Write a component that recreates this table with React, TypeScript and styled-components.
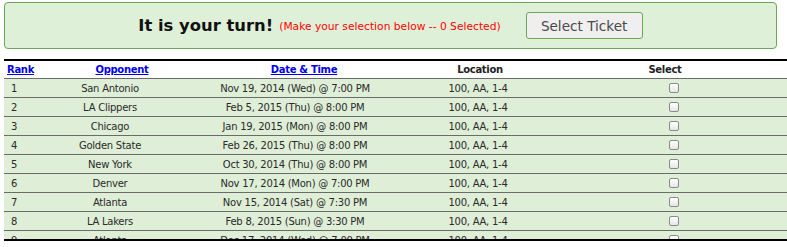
import React from "react";
import styled, { createGlobalStyle } from "styled-components";

const Global = createGlobalStyle`
  html, body { margin: 0; padding: 0; background: #fff; overflow: hidden; }
  body { font-family: "DejaVu Sans", Verdana, sans-serif; color: #2a2a2a; }
`;

const Page = styled.div`
  padding: 2px 0 0 4px;
  width: 783px;
  overflow: hidden;
`;

const Banner = styled.div`
  width: 771px;
  height: 45px;
  border: 1px solid #6aa857;
  border-radius: 4px;
  background: #dff0d8;
  display: flex;
  align-items: center;
  justify-content: center;
`;

const Title = styled.span`
  font-size: 16.4px;
  font-weight: bold;
  color: #111;
`;

const Note = styled.span`
  font-size: 10.7px;
  color: #ff0000;
  margin-left: 6px;
  position: relative;
  top: 1px;
`;

const Button = styled.button`
  margin-left: 25px;
  width: 117px;
  height: 27px;
  border: 1px solid #6aa857;
  border-radius: 3px;
  background: #efefef;
  color: #4a4a4a;
  font-family: "DejaVu Sans", Verdana, sans-serif;
  font-size: 13.6px;
  padding: 0;
`;

const Panel = styled.div`
  margin-top: 10px;
  width: 800px;
  border-top: 2px solid #000;
  border-bottom: 2px solid #000;
`;

const HeadRow = styled.div`
  display: grid;
  grid-template-columns: 46px 144px 220px 132px 238px;
  height: 17px;
  align-items: center;
  font-size: 10px;
  font-weight: bold;
  letter-spacing: -0.3px;
`;

const HeadCell = styled.div<{ $left?: boolean }>`
  text-align: ${(p) => (p.$left ? "left" : "center")};
  padding-left: ${(p) => (p.$left ? "3px" : "0")};
  color: #222;
`;

const SortLink = styled.a`
  color: #0000ee;
  text-decoration: underline;
`;

const Body = styled.div`
  height: 161px;
  overflow: hidden;
`;

const Row = styled.div`
  display: grid;
  grid-template-columns: 36px 140px 230px 136px 256px;
  height: 18px;
  border-top: 1px solid #6b6b6b;
  background: #dfeed7;
  align-items: center;
  font-size: 10px;
  letter-spacing: -0.25px;
`;

const Cell = styled.div<{ $left?: boolean }>`
  text-align: ${(p) => (p.$left ? "left" : "center")};
  padding-left: ${(p) => (p.$left ? "7px" : "0")};
  white-space: nowrap;
`;

const CheckCell = styled.div`
  display: flex;
  justify-content: center;
`;

const Box = styled.span`
  display: block;
  width: 8px;
  height: 8px;
  border: 1px solid #8a8a8a;
  border-radius: 2px;
  background: linear-gradient(#ffffff, #e6e6e6);
`;

const rows = [
  ["1", "San Antonio", "Nov 19, 2014 (Wed) @ 7:00 PM"],
  ["2", "LA Clippers", "Feb 5, 2015 (Thu) @ 8:00 PM"],
  ["3", "Chicago", "Jan 19, 2015 (Mon) @ 8:00 PM"],
  ["4", "Golden State", "Feb 26, 2015 (Thu) @ 8:00 PM"],
  ["5", "New York", "Oct 30, 2014 (Thu) @ 8:00 PM"],
  ["6", "Denver", "Nov 17, 2014 (Mon) @ 7:00 PM"],
  ["7", "Atlanta", "Nov 15, 2014 (Sat) @ 7:30 PM"],
  ["8", "LA Lakers", "Feb 8, 2015 (Sun) @ 3:30 PM"],
  ["9", "Atlanta", "Dec 17, 2014 (Wed) @ 7:00 PM"],
];

export default function App() {
  return (
    <Page>
      <Global />
      <Banner>
        <Title>It is your turn!</Title>
        <Note>(Make your selection below -- 0 Selected)</Note>
        <Button>Select Ticket</Button>
      </Banner>
      <Panel>
        <HeadRow>
          <HeadCell $left><SortLink href="#">Rank</SortLink></HeadCell>
          <HeadCell><SortLink href="#">Opponent</SortLink></HeadCell>
          <HeadCell><SortLink href="#">Date &amp; Time</SortLink></HeadCell>
          <HeadCell>Location</HeadCell>
          <HeadCell>Select</HeadCell>
        </HeadRow>
        <Body>
          {rows.map((r) => (
            <Row key={r[0]}>
              <Cell $left>{r[0]}</Cell>
              <Cell>{r[1]}</Cell>
              <Cell>{r[2]}</Cell>
              <Cell>100, AA, 1-4</Cell>
              <CheckCell><Box /></CheckCell>
            </Row>
          ))}
        </Body>
      </Panel>
    </Page>
  );
}
